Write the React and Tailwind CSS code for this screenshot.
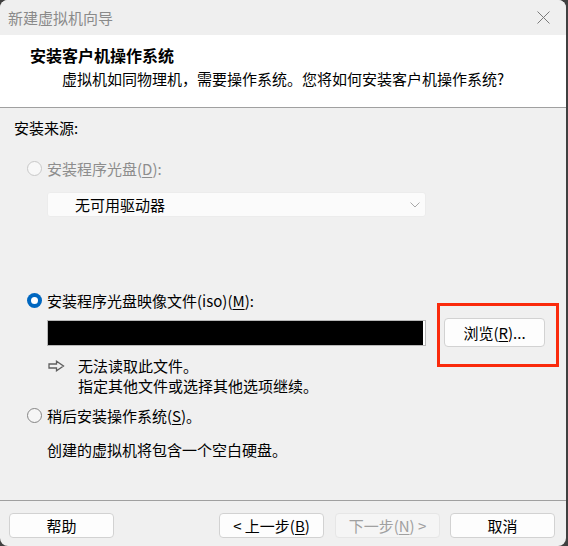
import React from 'react';

function Radio({ checked, disabled }) {
  if (checked) {
    return (
      <span className="w-[15px] h-[15px] rounded-full bg-[#0067c0] flex items-center justify-center shrink-0">
        <span className="w-[7px] h-[7px] rounded-full bg-white"></span>
      </span>
    );
  }
  return (
    <span
      className={
        disabled
          ? 'w-[15px] h-[15px] rounded-full border border-[#c8c8c8] bg-[#f8f8f8] shrink-0'
          : 'w-[15px] h-[15px] rounded-full border border-[#858585] bg-[#f6f6f6] shrink-0'
      }
    ></span>
  );
}

function Btn({ children, disabled, size, className }) {
  return (
    <div
      className={
        (disabled
          ? 'bg-[#f5f5f5] border-[#e6e6e6] text-[#a0a0a0] '
          : 'bg-[#fdfdfd] border-[#d2d2d2] text-black ') +
        (size || 'h-[25px] w-[105px] ') +
        ' border rounded-[4px] flex items-center justify-center leading-none ' +
        (className || '')
      }
    >
      {children}
    </div>
  );
}

export default function App() {
  return (
    <div className="w-[568px] h-[546px] bg-[#404040] font-['Noto_Sans_CJK_SC','Noto_Sans',sans-serif] text-[15px] text-black">
      <div className="relative w-[566px] h-[546px] rounded-[8px] overflow-hidden bg-[#f0f0f0] flex flex-col">
        {/* title bar */}
        <div className="h-[35px] flex items-center justify-between pl-[8px] pr-[16px] bg-[#efefef]">
          <span className="text-[15px] text-[#8a8a8a] leading-none">新建虚拟机向导</span>
          <svg width="13" height="13" viewBox="0 0 13 13">
            <path d="M0.5 0.5 L12.5 12.5 M12.5 0.5 L0.5 12.5" stroke="#7a7a7a" strokeWidth="1" fill="none" />
          </svg>
        </div>

        {/* header */}
        <div className="h-[73px] bg-white border-b border-[#a0a0a0] pt-[10px]">
          <div className="pl-[30px] leading-[20px] text-[16px] font-bold">安装客户机操作系统</div>
          <div className="pl-[62px] mt-[4px] leading-[20px] text-[15px]">
            虚拟机如同物理机，需要操作系统。您将如何安装客户机操作系统?
          </div>
        </div>

        {/* body */}
        <div className="flex-1 flex flex-col pt-[10px] pl-[14px]">
          <div className="leading-[20px]">安装来源:</div>

          <div className="mt-[20px] ml-[13px] flex items-center gap-[5px] h-[20px] text-[#8d8d8d]">
            <Radio disabled />
            <span className="leading-none">
              安装程序光盘(<u className="underline-offset-2">D</u>):
            </span>
          </div>

          <div className="mt-[14px] ml-[33px] w-[379px] h-[25px] bg-[#fbfbfb] border border-[#ececec] rounded-[3px] flex items-center justify-between pl-[27px] pr-[5px]">
            <span className="leading-none">无可用驱动器</span>
            <svg width="10" height="6" viewBox="0 0 10 6">
              <path d="M0.5 0.5 L5 5 L9.5 0.5" stroke="#a8a8a8" strokeWidth="1" fill="none" />
            </svg>
          </div>

          <div className="mt-[73px] ml-[13px] flex items-center gap-[5px] h-[20px]">
            <Radio checked />
            <span className="leading-none">
              安装程序光盘映像文件(iso)(<u className="underline-offset-2">M</u>):
            </span>
          </div>

          <div className="mt-[8px] ml-[33px] flex items-center h-[29px]">
            <div className="w-[379px] h-[26px] bg-white border border-[#b8b8b8] flex">
              <div className="flex-1 bg-black"></div>
              <div className="w-[2px]"></div>
            </div>
            <Btn size="w-[101px] h-[29px]" className="ml-[18px]">
              浏览(<u className="underline-offset-2">R</u>)...
            </Btn>
          </div>

          <div className="mt-[9px] ml-[34px] flex items-start">
            <div className="w-[30px] h-[20px] flex items-center">
              <svg width="17" height="12" viewBox="0 0 17 12">
                <path d="M1 4 H8.5 V1.2 L15.5 6 L8.5 10.8 V8 H1 Z" stroke="#5f5f5f" strokeWidth="1.3" fill="none" strokeLinejoin="miter" />
              </svg>
            </div>
            <div className="leading-[20px]">
              <div>无法读取此文件。</div>
              <div>指定其他文件或选择其他选项继续。</div>
            </div>
          </div>

          <div className="mt-[9px] ml-[13px] flex items-center gap-[5px] h-[20px]">
            <Radio />
            <span className="leading-none">
              稍后安装操作系统(<u className="underline-offset-2">S</u>)。
            </span>
          </div>

          <div className="mt-[15px] ml-[33px] leading-[20px]">创建的虚拟机将包含一个空白硬盘。</div>
        </div>

        {/* footer */}
        <div className="h-[46px] border-t border-[#a0a0a0] flex items-start pt-[12px] pl-[9px]">
          <Btn>帮助</Btn>
          <Btn className="ml-[105px]">
            &lt; 上一步(<u className="underline-offset-2">B</u>)
          </Btn>
          <Btn disabled className="ml-[11px]">
            下一步(<u className="underline-offset-2">N</u>) &gt;
          </Btn>
          <Btn className="ml-[10px]">取消</Btn>
        </div>

        {/* red highlight */}
        <div className="absolute left-[437px] top-[303px] w-[122px] h-[64px] border-[3px] border-[#fa2a0c]"></div>
      </div>
    </div>
  );
}
